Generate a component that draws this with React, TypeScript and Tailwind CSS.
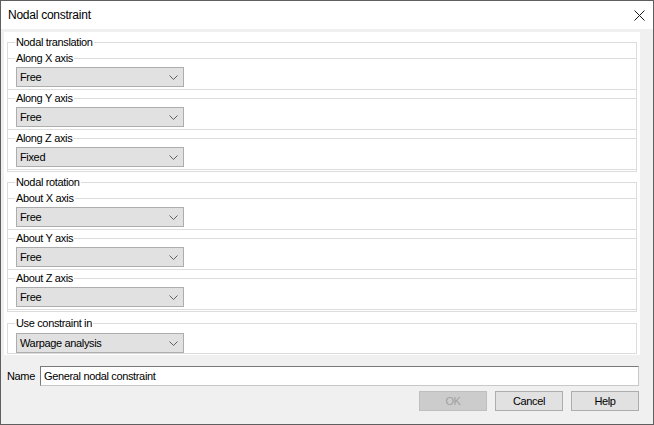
import type { ReactNode } from 'react';

function Chevron() {
  return (
    <svg width="9" height="5" viewBox="0 0 9 5" className="shrink-0">
      <polyline points="0.5,0.5 4.5,4.5 8.5,0.5" fill="none" stroke="#5f5f5f" strokeWidth="1" />
    </svg>
  );
}

function Dropdown({ value }: { value: string }) {
  return (
    <div className="ml-[1px] flex h-[20px] w-[168px] items-center justify-between border border-[#adadad] bg-[#e1e1e1] pl-[3px] pr-[5px] text-[11px] leading-none text-black">
      <span>{value}</span>
      <Chevron />
    </div>
  );
}

function Group({
  title,
  padded,
  className = '',
  children,
}: {
  title: string;
  padded?: boolean;
  className?: string;
  children: ReactNode;
}) {
  return (
    <fieldset className={`border border-[#dcdcdc] ${padded ? 'px-[7px]' : ''} ${className}`}>
      <legend className={`px-[1px] text-[11px] leading-[13px] text-black ${padded ? 'ml-0' : 'ml-[7px]'}`}>
        {title}
      </legend>
      {children}
    </fieldset>
  );
}

function AxisGroup({ title, value, first }: { title: string; value: string; first?: boolean }) {
  return (
    <Group title={title} padded className={`-mx-px pb-[2px] ${first ? 'mt-[3px]' : 'mt-[2px]'}`}>
      <div className="mt-[2px]">
        <Dropdown value={value} />
      </div>
    </Group>
  );
}

export default function App() {
  return (
    <div className="h-[425px] w-[654px] border border-[#5f5f5f] bg-[#f0f0f0] font-['Liberation_Sans',Arial,sans-serif] tracking-[-0.35px] text-black">
      {/* title bar */}
      <div className="flex h-[28px] items-center justify-between bg-white pl-[7px] pr-[8px]">
        <span className="text-[12px] tracking-[-0.25px]">Nodal constraint</span>
        <svg width="11" height="11" viewBox="0 0 11 11">
          <path d="M0.5 0.5 L10.5 10.5 M10.5 0.5 L0.5 10.5" stroke="#1a1a1a" strokeWidth="1" />
        </svg>
      </div>

      {/* white panel */}
      <div className="ml-[3px] mt-[3px] h-[323px] w-[636px] bg-white px-[3px] pt-[4px]">
        <Group title="Nodal translation" className="pb-[1px]">
          <AxisGroup title="Along X axis" value="Free" first />
          <AxisGroup title="Along Y axis" value="Free" />
          <AxisGroup title="Along Z axis" value="Fixed" />
        </Group>

        <Group title="Nodal rotation" className="mt-[4px] pb-[1px]">
          <AxisGroup title="About X axis" value="Free" first />
          <AxisGroup title="About Y axis" value="Free" />
          <AxisGroup title="About Z axis" value="Free" />
        </Group>

        <Group title="Use constraint in" padded className="mt-[5px]">
          <div className="mt-[3px]">
            <Dropdown value="Warpage analysis" />
          </div>
        </Group>
      </div>

      {/* name row */}
      <div className="mt-[11px] flex items-center pl-[6px] pr-[14px]">
        <span className="w-[33px] text-[11px]">Name</span>
        <div className="flex h-[20px] flex-1 items-center border border-[#7a7a7a] border-b-[#c8c8c8] border-r-[#c8c8c8] bg-white pl-[3px] text-[11px]">
          General nodal constraint
        </div>
      </div>

      {/* buttons */}
      <div className="mt-[5px] flex justify-end gap-[8px] pr-[14px] text-[11px]">
        <button className="h-[20px] w-[68px] border border-[#bfbfbf] bg-[#cccccc] text-[#a0a0a0]" disabled>
          OK
        </button>
        <button className="h-[20px] w-[68px] border border-[#adadad] bg-[#e1e1e1]">Cancel</button>
        <button className="h-[20px] w-[68px] border border-[#adadad] bg-[#e1e1e1]">Help</button>
      </div>
    </div>
  );
}
